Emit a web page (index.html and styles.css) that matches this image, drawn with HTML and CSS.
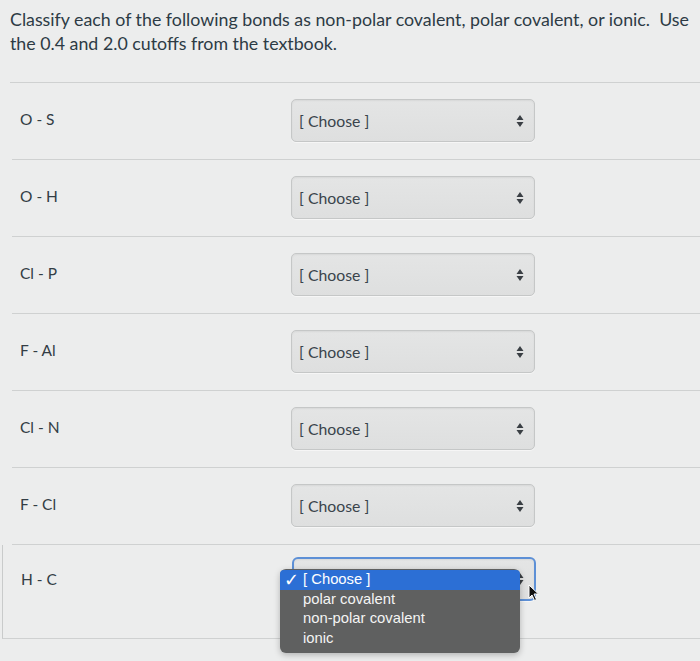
FILE: index.html
```html
<!DOCTYPE html>
<html>
<head>
<meta charset="utf-8">
<link rel="stylesheet" href="styles.css">
</head>
<body>
<div class="page">
  <div class="prompt">
    <p>Classify each of the following bonds as non-polar covalent, polar covalent, or ionic.&nbsp; Use the 0.4 and 2.0 cutoffs from the textbook.</p>
  </div>
  <div class="rows">
    <div class="row"><span class="label">O - S</span><div class="select"><span>[ Choose ]</span><svg class="arrows" viewBox="0 0 8 14" width="8" height="14"><path d="M4 1 L7.5 6 H0.5 Z M4 13 L7.5 8 H0.5 Z"/></svg></div></div>
    <div class="row"><span class="label">O - H</span><div class="select"><span>[ Choose ]</span><svg class="arrows" viewBox="0 0 8 14" width="8" height="14"><path d="M4 1 L7.5 6 H0.5 Z M4 13 L7.5 8 H0.5 Z"/></svg></div></div>
    <div class="row"><span class="label">Cl - P</span><div class="select"><span>[ Choose ]</span><svg class="arrows" viewBox="0 0 8 14" width="8" height="14"><path d="M4 1 L7.5 6 H0.5 Z M4 13 L7.5 8 H0.5 Z"/></svg></div></div>
    <div class="row"><span class="label">F - Al</span><div class="select"><span>[ Choose ]</span><svg class="arrows" viewBox="0 0 8 14" width="8" height="14"><path d="M4 1 L7.5 6 H0.5 Z M4 13 L7.5 8 H0.5 Z"/></svg></div></div>
    <div class="row"><span class="label">Cl - N</span><div class="select"><span>[ Choose ]</span><svg class="arrows" viewBox="0 0 8 14" width="8" height="14"><path d="M4 1 L7.5 6 H0.5 Z M4 13 L7.5 8 H0.5 Z"/></svg></div></div>
    <div class="row"><span class="label">F - Cl</span><div class="select"><span>[ Choose ]</span><svg class="arrows" viewBox="0 0 8 14" width="8" height="14"><path d="M4 1 L7.5 6 H0.5 Z M4 13 L7.5 8 H0.5 Z"/></svg></div></div>
    <div class="row last"><span class="label">H - C</span>
      <div class="select focused"><span class="hidden-value">[ Choose ]</span><svg class="arrows" viewBox="0 0 8 14" width="8" height="14"><path d="M4 1 L7.5 6 H0.5 Z M4 13 L7.5 8 H0.5 Z"/></svg>
        <ul class="menu">
          <li class="active"><span class="check">✓</span>[ Choose ]</li>
          <li>polar covalent</li>
          <li>non-polar covalent</li>
          <li>ionic</li>
        </ul>
        <svg class="cursor" viewBox="0 0 12 18" width="12" height="18"><path d="M1 1 L1 14 L4 11 L6.5 16.5 L8.5 15.5 L6 10 L10.5 10 Z" fill="#111" stroke="#fff" stroke-width="1"/></svg>
      </div>
    </div>
  </div>
</div>
</body>
</html>
```
FILE: styles.css
```css
html, body {
  margin: 0;
  padding: 0;
  background: #eceded;
}
.page {
  width: 700px;
  height: 661px;
  font-family: Lato, "Open Sans", sans-serif;
  color: #2d3b45;
  overflow: hidden;
}
.prompt {
  padding: 7px 0 0 0;
  height: 75px;
  border-bottom: 1px solid #cfd1d1;
  margin-left: 10px;
}
.prompt p {
  margin: 0;
  font-size: 17.8px;
  line-height: 24px;
}
.rows {
  margin-left: 12px;
}
.row {
  height: 77px;
  box-sizing: border-box;
  border-bottom: 1px solid #cfd1d1;
  display: grid;
  grid-template-columns: 279px 244px;
  align-items: start;
}
.label {
  font-size: 15.5px;
  line-height: 20px;
  margin-top: 26px;
  padding-left: 8px;
  color: #333d45;
}
.select {
  position: relative;
  margin-top: 16px;
  height: 43px;
  box-sizing: border-box;
  border: 1px solid #c5c7c7;
  border-radius: 5px;
  background: linear-gradient(#e4e5e5, #dedfdf);
  box-shadow: inset 0 1px 2px rgba(0,0,0,0.06), 0 1px 0 rgba(255,255,255,0.5);
  display: flex;
  align-items: center;
  justify-content: space-between;
  padding: 0 10px 0 7px;
  font-size: 15.8px;
  color: #3a444c;
}
.arrows path {
  fill: #3a3f44;
}
.row.last {
  height: 94px;
  margin-left: -10px;
  padding-left: 10px;
  border-left: 1px solid #c9cbcb;
}
.row.last .label {
  margin-top: 24px;
}
.row.last .select {
  margin-top: 12px;
  height: 44px;
  border: 2px solid #5d90d6;
  border-radius: 6px;
}
.hidden-value {
  visibility: hidden;
}
.menu {
  position: absolute;
  left: -14px;
  top: 10px;
  width: 240px;
  margin: 0;
  padding: 1px 0 5px;
  list-style: none;
  background: #5f6060;
  border-radius: 6px;
  box-shadow: 0 2px 6px rgba(0,0,0,0.25);
  font-family: "Liberation Sans", Arial, sans-serif;
  font-size: 14.8px;
  color: #f4f4f4;
  z-index: 2;
}
.menu li {
  height: 19.5px;
  line-height: 19.5px;
  padding-left: 23px;
  position: relative;
}
.menu li.active {
  background: #2c6fd5;
  border-radius: 4px 4px 0 0;
  color: #ffffff;
}
.check {
  position: absolute;
  left: 4px;
  top: 0;
  font-size: 18px;
  font-weight: bold;
  font-family: "DejaVu Sans", sans-serif;
}
.cursor {
  position: absolute;
  right: -6px;
  top: 25px;
  z-index: 3;
}
```
